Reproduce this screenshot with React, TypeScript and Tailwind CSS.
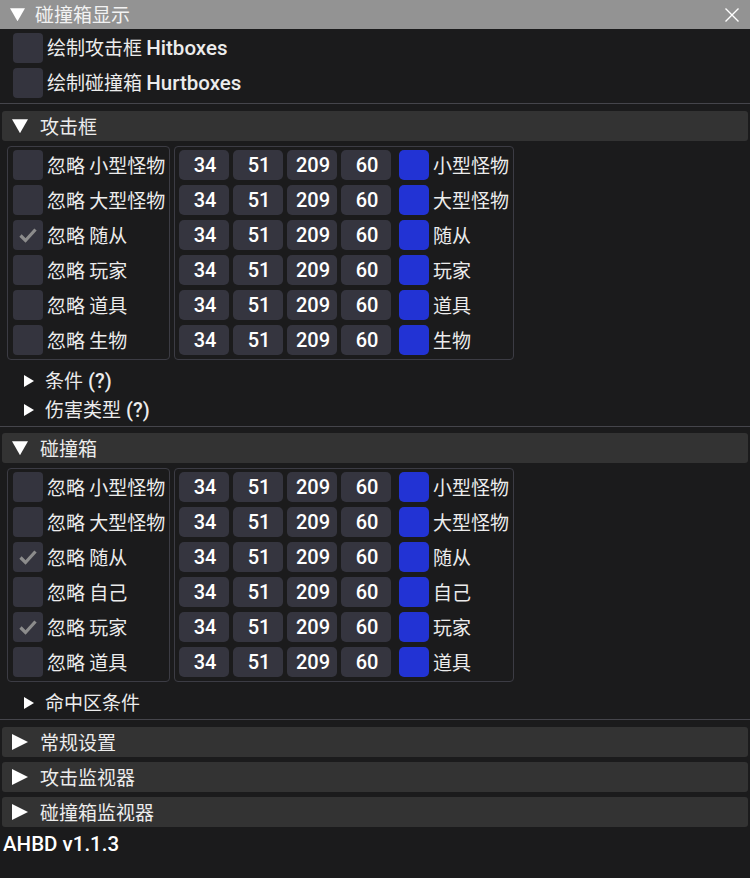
import React from "react"

const cjk = "font-['Noto_Sans_CJK_SC',sans-serif]"
const latin = "font-['Roboto','Noto_Sans_CJK_SC',sans-serif]"

type Row = { label: string; checked: boolean }

const hitRows: Row[] = [
  { label: "小型怪物", checked: false },
  { label: "大型怪物", checked: false },
  { label: "随从", checked: true },
  { label: "玩家", checked: false },
  { label: "道具", checked: false },
  { label: "生物", checked: false },
]

const hurtRows: Row[] = [
  { label: "小型怪物", checked: false },
  { label: "大型怪物", checked: false },
  { label: "随从", checked: true },
  { label: "自己", checked: false },
  { label: "玩家", checked: true },
  { label: "道具", checked: false },
]

function Checkbox({ checked }: { checked?: boolean }) {
  return (
    <div className="flex h-[30px] w-[30px] shrink-0 items-center justify-center rounded-[4px] bg-[#34343e]">
      {checked && (
        <svg width="20" height="20" viewBox="0 0 20 20">
          <polyline
            points="2.5,10.5 7.5,15.5 17.5,4.5"
            fill="none"
            stroke="#8c8c8c"
            strokeWidth="3.2"
          />
        </svg>
      )}
    </div>
  )
}

function DownTri({ size = 16 }: { size?: number }) {
  return (
    <svg width={size} height={size * 0.9} viewBox="0 0 16 14">
      <polygon points="0,0 16,0 8,14" fill="#ffffff" />
    </svg>
  )
}

function RightTri() {
  return (
    <svg width="10" height="12" viewBox="0 0 10 12">
      <polygon points="0,0 10,6 0,12" fill="#ffffff" />
    </svg>
  )
}

function Header({ title, open }: { title: string; open?: boolean }) {
  return (
    <div className="mx-[2px] flex h-[30px] items-center rounded-[3px] bg-[#333333] pl-[10px]">
      {open ? (
        <DownTri />
      ) : (
        <svg width="16" height="16" viewBox="0 0 16 16">
          <polygon points="0,0 16,8 0,16" fill="#ffffff" />
        </svg>
      )}
      <span className={`ml-[12px] text-[19px] text-[#ececec] ${cjk}`}>{title}</span>
    </div>
  )
}

function Separator() {
  return <div className="h-px bg-[#45454b]" />
}

function TreeNode({ label, hint }: { label: string; hint?: boolean }) {
  return (
    <div className="flex h-[29px] items-center pl-[24px]">
      <RightTri />
      <span className={`ml-[11px] whitespace-pre text-[19px] text-[#ececec] ${cjk}`}>
        {label}
        {hint && <span className={`text-[20px] font-medium ${latin}`}> (?)</span>}
      </span>
    </div>
  )
}

function NumBox({ value }: { value: number }) {
  return (
    <div
      className={`flex h-[30px] w-[50px] items-center justify-center rounded-[5px] bg-[#35353f] pl-[2px] text-[20px] font-medium text-white ${latin}`}
    >
      {value}
    </div>
  )
}

function FilterTable({ rows }: { rows: Row[] }) {
  return (
    <div className="ml-[7px] flex gap-[4px]">
      <div className="flex w-[163px] flex-col gap-[5px] rounded-[4px] border border-[#3c3c44] px-[5px] pb-[4px] pt-[3px]">
        {rows.map((r) => (
          <div key={r.label} className="flex h-[30px] items-center">
            <Checkbox checked={r.checked} />
            <span className={`ml-[4px] whitespace-nowrap text-[19px] text-[#ececec] ${cjk}`}>
              忽略 {r.label}
            </span>
          </div>
        ))}
      </div>
      <div className="flex w-[340px] flex-col gap-[5px] rounded-[4px] border border-[#3c3c44] px-[4px] pb-[4px] pt-[3px]">
        {rows.map((r) => (
          <div key={r.label} className="flex h-[30px] items-center">
            <div className="flex gap-[4px]">
              <NumBox value={34} />
              <NumBox value={51} />
              <NumBox value={209} />
              <NumBox value={60} />
            </div>
            <div className="ml-[8px] h-[30px] w-[30px] rounded-[5px] bg-[#2233d4]" />
            <span className={`ml-[4px] whitespace-nowrap text-[19px] text-[#ececec] ${cjk}`}>
              {r.label}
            </span>
          </div>
        ))}
      </div>
    </div>
  )
}

export default function App() {
  return (
    <div className="flex h-[878px] w-[750px] flex-col overflow-hidden bg-[#1b1b1c]">
      {/* 标题栏 */}
      <div className="flex h-[29px] shrink-0 items-center bg-[#939393] pl-[10px] pr-[10px]">
        <DownTri size={15} />
        <span className={`ml-[10px] text-[19px] text-[#f2f2f2] ${cjk}`}>碰撞箱显示</span>
        <svg className="ml-auto" width="16" height="16" viewBox="0 0 16 16">
          <path d="M1.5 1.5 L14.5 14.5 M14.5 1.5 L1.5 14.5" stroke="#ffffff" strokeWidth="1.4" />
        </svg>
      </div>

      <div className="flex flex-col">
        <div className="flex flex-col gap-[5px] pl-[13px] pt-[4px]">
          <div className="flex h-[30px] items-center">
            <Checkbox />
            <span className={`ml-[4px] text-[19px] text-[#ececec] ${cjk}`}>
              绘制攻击框 <span className={`text-[20.5px] font-medium ${latin}`}>Hitboxes</span>
            </span>
          </div>
          <div className="flex h-[30px] items-center">
            <Checkbox />
            <span className={`ml-[4px] text-[19px] text-[#ececec] ${cjk}`}>
              绘制碰撞箱 <span className={`text-[20.5px] font-medium ${latin}`}>Hurtboxes</span>
            </span>
          </div>
        </div>

        <div className="mt-[5px]">
          <Separator />
        </div>
        <div className="mt-[7px]">
          <Header title="攻击框" open />
        </div>
        <div className="mt-[5px]">
          <FilterTable rows={hitRows} />
        </div>
        <div className="mt-[6px]">
          <TreeNode label="条件" hint />
          <TreeNode label="伤害类型" hint />
        </div>
        <div className="mt-[2px]">
          <Separator />
        </div>
        <div className="mt-[6px]">
          <Header title="碰撞箱" open />
        </div>
        <div className="mt-[5px]">
          <FilterTable rows={hurtRows} />
        </div>
        <div className="mt-[6px]">
          <TreeNode label="命中区条件" />
        </div>
        <div className="mt-[2px]">
          <Separator />
        </div>
        <div className="mt-[7px] flex flex-col gap-[5px]">
          <Header title="常规设置" />
          <Header title="攻击监视器" />
          <Header title="碰撞箱监视器" />
        </div>
        <div className={`mt-[5px] pl-[3px] text-[20.5px] font-medium leading-[24px] text-white ${latin}`}>
          AHBD v1.1.3
        </div>
      </div>
    </div>
  )
}
